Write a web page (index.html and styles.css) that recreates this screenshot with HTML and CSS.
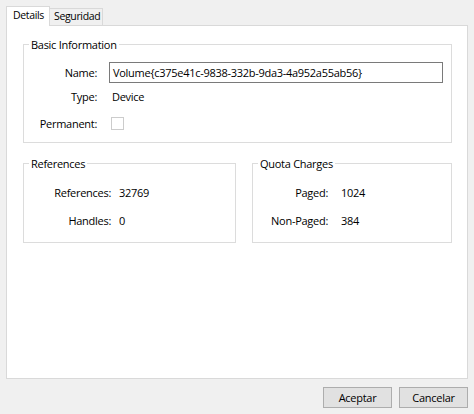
FILE: index.html
```html
<!DOCTYPE html>
<html>
<head>
<meta charset="utf-8">
<link rel="stylesheet" href="styles.css">
</head>
<body>
<div class="window">
  <div class="tabs">
    <div class="tab active">Details</div>
    <div class="tab">Seguridad</div>
  </div>
  <div class="panel">
    <fieldset class="group basic">
      <legend>Basic Information</legend>
      <div class="row r1">
        <span class="label">Name:</span>
        <div class="textbox">Volume{c375e41c-9838-332b-9da3-4a952a55ab56}</div>
      </div>
      <div class="row r2">
        <span class="label">Type:</span>
        <span class="value">Device</span>
      </div>
      <div class="row r3">
        <span class="label">Permanent:</span>
        <span class="checkbox"></span>
      </div>
    </fieldset>
    <div class="pair">
      <fieldset class="group refs">
        <legend>References</legend>
        <div class="row k1"><span class="label">References:</span><span class="value">32769</span></div>
        <div class="row k2"><span class="label">Handles:</span><span class="value">0</span></div>
      </fieldset>
      <fieldset class="group quota">
        <legend>Quota Charges</legend>
        <div class="row k1"><span class="label">Paged:</span><span class="value">1024</span></div>
        <div class="row k2"><span class="label">Non-Paged:</span><span class="value">384</span></div>
      </fieldset>
    </div>
  </div>
  <div class="buttons">
    <button class="btn">Aceptar</button>
    <button class="btn">Cancelar</button>
  </div>
</div>
</body>
</html>
```
FILE: styles.css
```css
html, body {
  margin: 0;
  padding: 0;
}
body {
  width: 474px;
  height: 414px;
  background: #f0f0f0;
  font-family: "Open Sans", "Noto Sans", sans-serif;
  font-size: 11px;
  letter-spacing: -0.28px;
  color: #000;
  overflow: hidden;
}
.window {
  padding: 6px 6px 0 6px;
}
.tabs {
  display: flex;
  align-items: flex-end;
  height: 20px;
  margin-bottom: -1px;
  position: relative;
  z-index: 1;
}
.tab {
  box-sizing: border-box;
  width: 54px;
  height: 17px;
  border: 1px solid #d9d9d9;
  border-bottom: none;
  background: #f0f0f0;
  padding: 0 0 0 4px;
  line-height: 15px;
  margin-bottom: 1px;
  margin-left: -1px;
  font-size: 10.5px;
  letter-spacing: -0.35px;
  white-space: nowrap;
}
.tab:first-child {
  margin-left: 0;
}
.tab.active {
  width: 44px;
  height: 20px;
  background: #fff;
  margin-bottom: 0;
  padding: 0 0 0 6px;
  line-height: 16px;
}
.panel {
  box-sizing: border-box;
  height: 354px;
  background: #fff;
  border: 1px solid #d9d9d9;
  padding: 11px 15px 0 16px;
}
.group {
  margin: 0;
  padding: 0;
  min-width: 0;
  border: 1px solid #dcdcdc;
}
.group legend {
  padding: 0 2px;
  margin-left: 5px;
  line-height: 15px;
  height: 15px;
}
.basic {
  padding: 10px 8px 8px 0;
}
.row {
  display: flex;
  align-items: center;
  height: 21px;
}
.label {
  flex: none;
  text-align: right;
}
.basic .label {
  width: 73px;
  margin-right: 12px;
}
.r2 { margin-top: 3px; }
.r3 { margin-top: 6px; }
.textbox {
  flex: 1;
  box-sizing: border-box;
  height: 21px;
  border: 1px solid #7a7a7a;
  background: #fff;
  padding: 0 3px;
  line-height: 19px;
  white-space: nowrap;
  overflow: hidden;
}
.basic .value {
  padding-left: 3px;
}
.checkbox {
  box-sizing: border-box;
  width: 13px;
  height: 13px;
  border: 1px solid #cccccc;
  margin-left: 2px;
  background: #fff;
}
.pair {
  display: grid;
  grid-template-columns: 213px 1fr;
  column-gap: 16px;
  margin-top: 13px;
}
.refs, .quota {
  padding: 11px 0 12px 0;
}
.refs .row, .quota .row {
  height: 20px;
}
.k2 { margin-top: 8px; }
.refs .label {
  width: 87px;
  margin-right: 8px;
}
.quota .label {
  width: 75px;
  margin-right: 13px;
}
.buttons {
  display: flex;
  justify-content: flex-end;
  gap: 7px;
  margin-top: 8px;
}
.btn {
  box-sizing: border-box;
  width: 69px;
  height: 21px;
  margin: 0;
  padding: 0;
  background: #e1e1e1;
  border: 1px solid #adadad;
  font-family: inherit;
  font-size: 11px;
  letter-spacing: -0.28px;
  color: #000;
}
```
